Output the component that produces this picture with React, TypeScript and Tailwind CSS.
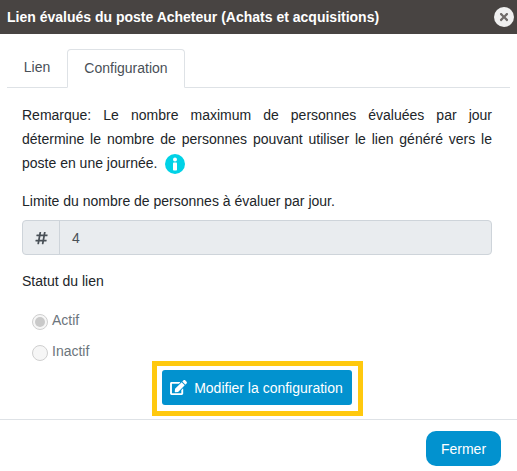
import React from 'react';
import { FaEdit, FaHashtag, FaTimes } from 'react-icons/fa';

const RadioRow = ({ label, checked }: { label: string; checked?: boolean }) => (
  <label className="flex items-center h-[31px] pl-[10px] text-[#6c757d]">
    <span className="w-[16px] h-[16px] mt-[3px] rounded-full border border-[#cfcfcf] bg-[#f6f6f6] flex items-center justify-center">
      {checked && <span className="w-[10px] h-[10px] rounded-full bg-[#c9c9c9]" />}
    </span>
    <span className="ml-[4px] -mt-[1px]">{label}</span>
  </label>
);

const App: React.FC = () => {
  return (
    <div className="w-[517px] h-[471px] overflow-hidden bg-white text-[14px] leading-[24px] text-[#212529] font-['Liberation_Sans',Arial,sans-serif]">
      <div className="h-[34px] bg-[#484442] flex items-center justify-between pl-[7px] pr-[3px]">
        <h1 className="text-white font-bold text-[14px]">Lien évalués du poste Acheteur (Achats et acquisitions)</h1>
        <button type="button" className="w-[20px] h-[20px] rounded-full bg-[#f0f0f0] flex items-center justify-center text-[#6f6b69]">
          <FaTimes className="w-[12px] h-[12px]" />
        </button>
      </div>

      <div className="px-[7px] pt-[15px]">
        <div className="flex border-b border-[#dee2e6] h-[39px] text-[#495057]">
          <div className="w-[60px] flex items-center justify-center pb-[2px]">Lien</div>
          <div className="w-[118px] h-[39px] pb-[2px] flex items-center justify-center bg-white border border-[#dee2e6] border-b-white rounded-t">
            Configuration
          </div>
        </div>
      </div>

      <div className="pl-[22px] pr-[25px] pt-[15px]">
        <p>
          <span className="block [text-align-last:justify]">Remarque: Le nombre maximum de personnes évaluées par jour</span>
          <span className="block [text-align-last:justify]">détermine le nombre de personnes pouvant utiliser le lien généré vers le</span>
          <span className="flex items-center h-[24px]">
            poste en une journée.
            <svg viewBox="0 0 20 20" className="ml-[8px] mt-[2px] w-[20px] h-[20px]">
              <circle cx="10" cy="10" r="10" fill="#00d2e6" />
              <circle cx="10" cy="5.5" r="2" fill="#fff" />
              <rect x="8" y="8.5" width="4" height="8" rx="0.8" fill="#fff" />
            </svg>
          </span>
        </p>

        <p className="mt-[14px]">Limite du nombre de personnes à évaluer par jour.</p>

        <div className="mt-[7px] flex h-[35px] bg-[#e9ecef] border border-[#ced4da] rounded text-[#495057]">
          <div className="w-[37px] border-r border-[#ced4da] flex items-center justify-center">
            <FaHashtag className="w-[13px] h-[14px]" />
          </div>
          <div className="pl-[12px] flex items-center">4</div>
        </div>

        <p className="mt-[14px]">Statut du lien</p>

        <div className="mt-[12px]">
          <RadioRow label="Actif" checked />
          <RadioRow label="Inactif" />
        </div>

        <div className="flex justify-center -mt-[6px]">
          <div className="border-[5px] border-[#ffc90e] pl-[5px] pr-[6px] pt-[4px] pb-[6px]">
            <button type="button" className="w-[190px] h-[35px] bg-[#0292cf] text-white rounded-[3px] flex items-center justify-center gap-[7px]">
              <FaEdit className="w-[17px] h-[15px]" />
              Modifier la configuration
            </button>
          </div>
        </div>
      </div>

      <div className="mt-[3px] border-t border-[#dee2e6] pt-[11px] pr-[16px] flex justify-end">
        <button type="button" className="w-[75px] h-[35px] bg-[#0292cf] text-white rounded-[10px]">Fermer</button>
      </div>
    </div>
  );
};

export default App;
